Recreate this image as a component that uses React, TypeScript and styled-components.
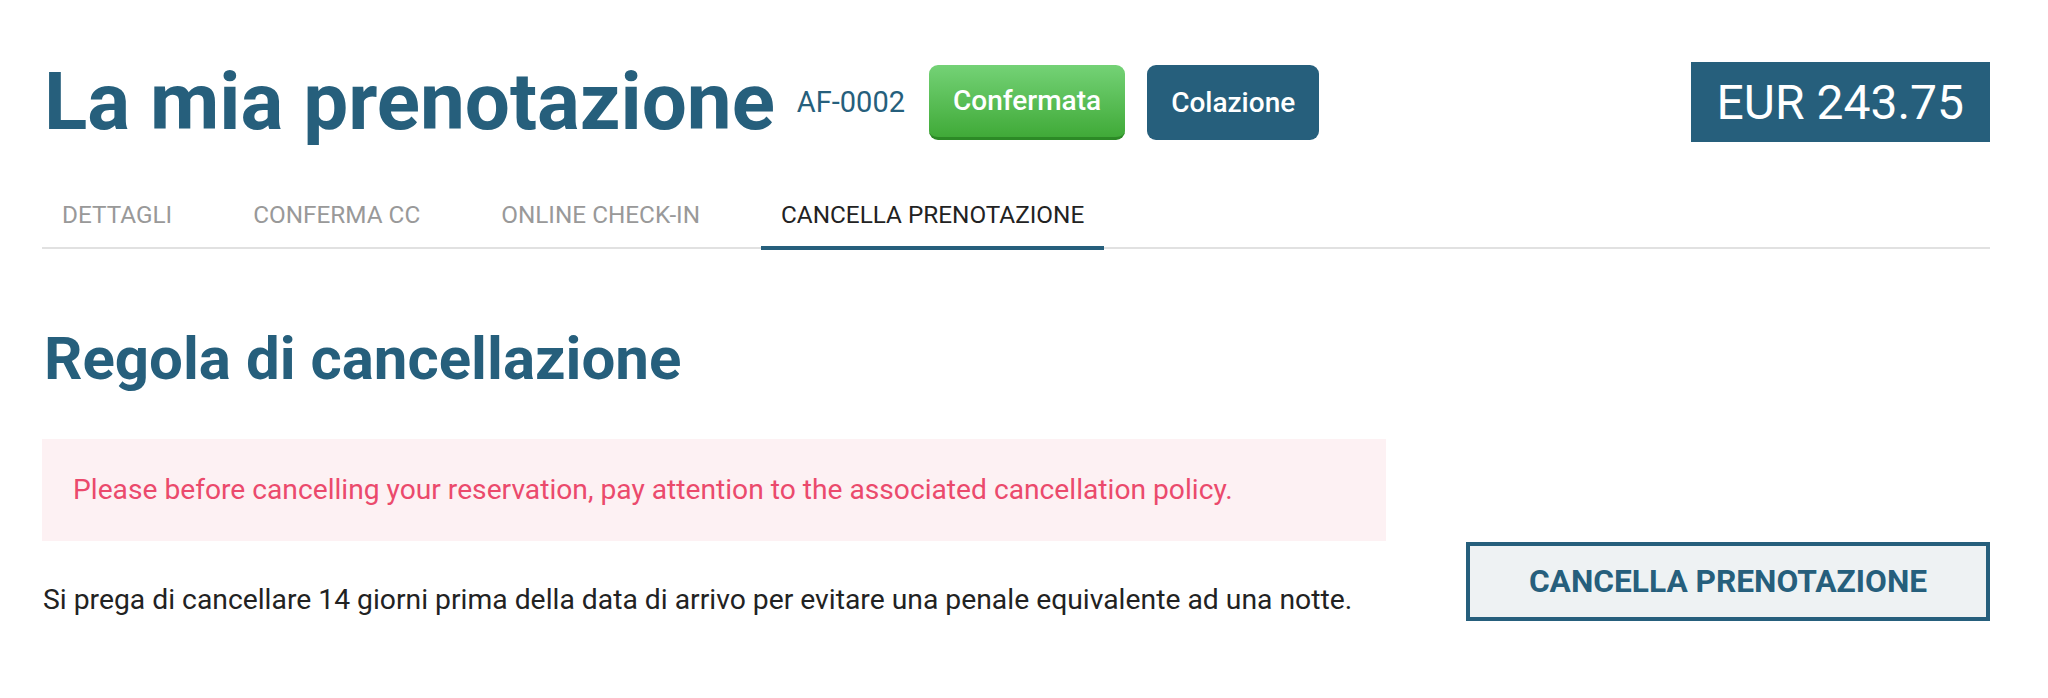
import React, { useState } from 'react'
import styled, { createGlobalStyle } from 'styled-components'

const BLUE = '#265f7c'

const GlobalStyle = createGlobalStyle`
    html, body {
        margin: 0;
        padding: 0;
        background: #fff;
        font-family: Roboto, "Noto Sans", Arial, sans-serif;
    }
`

const Page = styled.div`
    padding: 62px 58px 40px 42px;
`

const Header = styled.header`
    display: flex;
    align-items: center;
    justify-content: space-between;
`

const TitleGroup = styled.div`
    display: flex;
    align-items: center;
`

const Title = styled.h1`
    margin: 0 22px 0 2px;
    font-size: 80px;
    font-weight: 700;
    line-height: 80px;
    color: ${BLUE};
`

const Code = styled.span`
    font-size: 29px;
    color: ${BLUE};
    margin-right: 24px;
`

const Badge = styled.span<{ $tone: 'green' | 'blue' }>`
    display: inline-flex;
    align-items: center;
    justify-content: center;
    box-sizing: border-box;
    height: 75px;
    padding: 0 24px;
    margin-right: 22px;
    border-radius: 9px;
    font-size: 28px;
    font-weight: 500;
    color: #fff;
    background: ${p => (p.$tone === 'green'
        ? 'linear-gradient(#74d276, #40aa38)'
        : BLUE)};
    border-bottom: ${p => (p.$tone === 'green' ? '3px solid #2c8a26' : 'none')};
`

const Price = styled.div`
    box-sizing: border-box;
    height: 80px;
    padding: 0 26px;
    display: flex;
    align-items: center;
    background: ${BLUE};
    color: #fff;
    font-size: 48px;
`

const Tabs = styled.nav`
    display: flex;
    gap: 41px;
    margin-top: 36px;
    border-bottom: 2px solid #e1e1e1;
`

const Tab = styled.button<{ $active?: boolean }>`
    background: none;
    border: none;
    padding: 22px 20px 17px;
    margin-bottom: -3px;
    font-family: inherit;
    font-size: 24.3px;
    text-transform: uppercase;
    color: ${p => (p.$active ? '#222' : '#999')};
    border-bottom: 4px solid ${p => (p.$active ? BLUE : 'transparent')};
    cursor: pointer;
`

const SectionTitle = styled.h2`
    margin: 74px 0 0 2px;
    font-size: 60px;
    line-height: 72px;
    font-weight: 700;
    color: ${BLUE};
`

const Body = styled.div`
    display: grid;
    grid-template-columns: 1344px 1fr;
    gap: 80px;
    align-items: end;
    margin-top: 44px;
`

const Alert = styled.div`
    background: #fdf1f3;
    color: #eb4a6c;
    font-size: 28.2px;
    padding: 34px 31px;
    line-height: 34px;
`

const Note = styled.p`
    margin: 38px 0 0 1px;
    font-size: 28.3px;
    line-height: 42px;
    color: #222;
`

const CancelButton = styled.button`
    box-sizing: border-box;
    width: 100%;
    height: 79px;
    border: 4px solid ${BLUE};
    background: #eef2f3;
    color: ${BLUE};
    font-family: inherit;
    font-size: 31.7px;
    font-weight: 700;
    text-transform: uppercase;
    cursor: pointer;
`

const tabs = ['Dettagli', 'Conferma CC', 'Online check-in', 'Cancella prenotazione']

export default function App() {
    const [active, setActive] = useState(3)

    return (
        <Page>
            <GlobalStyle />
            <Header>
                <TitleGroup>
                    <Title>La mia prenotazione</Title>
                    <Code>AF-0002</Code>
                    <Badge $tone="green">Confermata</Badge>
                    <Badge $tone="blue">Colazione</Badge>
                </TitleGroup>
                <Price>EUR 243.75</Price>
            </Header>

            <Tabs>
                {tabs.map((t, i) => (
                    <Tab key={t} $active={i === active} onClick={() => setActive(i)}>
                        {t}
                    </Tab>
                ))}
            </Tabs>

            <SectionTitle>Regola di cancellazione</SectionTitle>

            <Body>
                <div>
                    <Alert>
                        Please before cancelling your reservation, pay attention to the associated cancellation policy.
                    </Alert>
                    <Note>
                        Si prega di cancellare 14 giorni prima della data di arrivo per evitare una penale equivalente ad una notte.
                    </Note>
                </div>
                <CancelButton>Cancella prenotazione</CancelButton>
            </Body>
        </Page>
    )
}
